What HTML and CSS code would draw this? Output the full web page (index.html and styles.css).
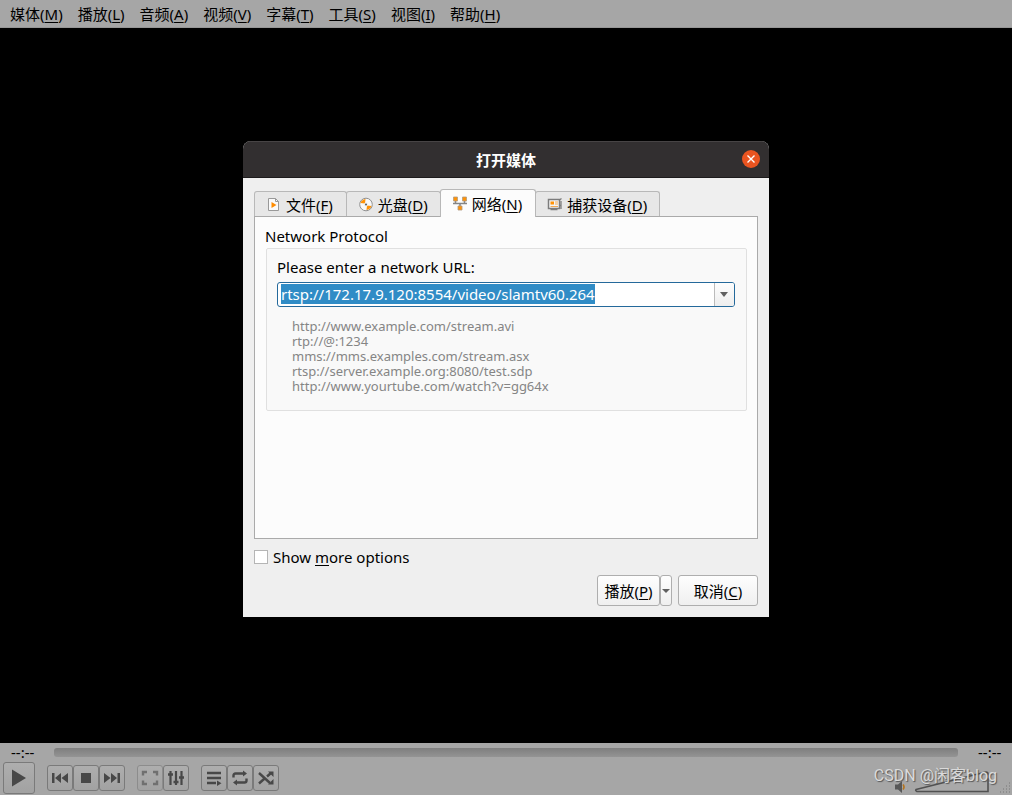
FILE: index.html
```html
<!DOCTYPE html>
<html lang="zh-CN">
<head>
<meta charset="utf-8">
<meta name="viewport" content="width=device-width, initial-scale=1">
<title>打开媒体</title>
<link rel="stylesheet" href="styles.css">
</head>
<body>
<div class="player">
  <nav class="menubar">
    <button class="menu">媒体(<u>M</u>)</button>
    <button class="menu">播放(<u>L</u>)</button>
    <button class="menu">音频(<u>A</u>)</button>
    <button class="menu">视频(<u>V</u>)</button>
    <button class="menu">字幕(<u>T</u>)</button>
    <button class="menu">工具(<u>S</u>)</button>
    <button class="menu">视图(<u>I</u>)</button>
    <button class="menu">帮助(<u>H</u>)</button>
  </nav>

  <main class="video">
    <section class="dialog" role="dialog" aria-labelledby="dialog-title">
      <header class="titlebar">
        <h1 class="title" id="dialog-title">打开媒体</h1>
        <button class="close" aria-label="Close">
          <svg width="18" height="18" viewBox="0 0 18 18"><path d="M5.500 5.500l7 7M12.500 5.500l-7 7" stroke="#fff" stroke-width="1.400" fill="none"/></svg>
        </button>
      </header>

      <div class="dialog-body">
        <div class="tabs" role="tablist">
          <button class="tab" role="tab" aria-selected="false">
            <svg class="tab-icon" width="16" height="16" viewBox="0 0 16 16"><path d="M2.500 1.500h7l3 3v9h-10z" fill="#fafafa" stroke="#999" stroke-linejoin="round"/><path d="M9.500 1.500v3h3" fill="none" stroke="#999"/><path d="M5.500 5v6l5-3z" fill="#ff8c00"/></svg>
            <span>文件(<u>F</u>)</span>
          </button>
          <button class="tab" role="tab" aria-selected="false">
            <svg class="tab-icon" width="16" height="16" viewBox="0 0 16 16"><circle cx="8" cy="7.500" r="6.300" fill="#f8f8f8" stroke="#909090"/><path d="M7 6.500L2.500 6q1-3.200 5-4zM9 8.500l4.500.5q-1 3.200-5 4z" fill="#ff9205"/><circle cx="8" cy="7.500" r="1.900" fill="#eee"/><circle cx="8" cy="7.500" r="1" fill="#555"/></svg>
            <span>光盘(<u>D</u>)</span>
          </button>
          <button class="tab tab-active" role="tab" aria-selected="true">
            <svg class="tab-icon" width="16" height="16" viewBox="0 0 16 16"><path d="M3.500 5v3M12.500 5v3M8 8v3M1 7.500h14" stroke="#858585" stroke-width="1.500" fill="none"/><path d="M1.500 1h4v4h-4zM10.500 1h4v4h-4zM6 10h4v4H6z" fill="#ff9205" stroke="#b09a80" stroke-width=".8"/></svg>
            <span>网络(<u>N</u>)</span>
          </button>
          <button class="tab" role="tab" aria-selected="false">
            <svg class="tab-icon" width="16" height="16" viewBox="0 0 16 16"><path d="M1.500 2.500h11v9h-11z" fill="#f5f5f5" stroke="#7c7c7c" stroke-width="1.500"/><path d="M12.500 3l2-1.500M14 4v8M3.500 12.500h7M12.500 8.500h2" stroke="#7c7c7c" stroke-width="1.300" fill="none"/><path d="M3.500 4.500H7v3H3.500z" fill="#ff9205"/><path d="M8 5h3M8 7h3M3.500 9.500H11" stroke="#f0ab58"/></svg>
            <span>捕获设备(<u>D</u>)</span>
          </button>
        </div>

        <div class="panel" role="tabpanel">
          <h2 class="group-title">Network Protocol</h2>
          <div class="group">
            <label class="url-label" for="url">Please enter a network URL:</label>
            <div class="combo">
              <input class="url" id="url" type="text" value="rtsp://172.17.9.120:8554/video/slamtv60.264" spellcheck="false" autofocus>
              <button class="combo-arrow" aria-label="Recent URLs"><svg width="8" height="5" viewBox="0 0 8 5"><path d="M0 0h8L4 5z" fill="#606060"/></svg></button>
            </div>
            <ul class="examples">
              <li>http://www.example.com/stream.avi</li>
              <li>rtp://@:1234</li>
              <li>mms://mms.examples.com/stream.asx</li>
              <li>rtsp://server.example.org:8080/test.sdp</li>
              <li>http://www.yourtube.com/watch?v=gg64x</li>
            </ul>
          </div>
        </div>

        <div class="more">
          <input class="check" id="more" type="checkbox">
          <label for="more">Show <u>m</u>ore options</label>
        </div>

        <div class="actions">
          <div class="split">
            <button class="btn btn-play">播放(<u>P</u>)</button>
            <button class="btn btn-arrow" aria-label="More play options"><svg width="8" height="4" viewBox="0 0 8 4"><path d="M0 0h8L4 4z" fill="#606060"/></svg></button>
          </div>
          <button class="btn btn-cancel">取消(<u>C</u>)</button>
        </div>
      </div>
    </section>
  </main>

  <footer class="controller">
    <div class="timeline">
      <span class="time">--:--</span>
      <input class="seek" type="range" value="0" aria-label="Position" disabled>
      <span class="time">--:--</span>
    </div>
    <div class="controls">
      <button class="tool tool-play" aria-label="Play"><svg width="20" height="20" viewBox="0 0 20 20"><path d="M3 1.500v17L17 10z" fill="currentColor"/></svg></button>
      <div class="tool-group">
        <button class="tool" aria-label="Previous"><svg width="18" height="18" viewBox="0 0 18 18"><path d="M1 4h2.500v10H1zM10 4v10L4 9zM17 4v10l-6.500-5z" fill="currentColor"/></svg></button>
        <button class="tool" aria-label="Stop"><svg width="18" height="18" viewBox="0 0 18 18"><path d="M4 4h10v10H4z" fill="currentColor"/></svg></button>
        <button class="tool" aria-label="Next"><svg width="18" height="18" viewBox="0 0 18 18"><path d="M17 4h-2.500v10H17zM8 4v10l6-5zM1 4v10l6.500-5z" fill="currentColor"/></svg></button>
      </div>
      <div class="tool-group">
        <button class="tool tool-off" aria-label="Fullscreen"><svg width="18" height="18" viewBox="0 0 18 18"><path d="M2 6.500v-3.500h4M12 3h4v3.500M16 11.500v3.500h-4M6 15h-4v-3.500" fill="none" stroke="currentColor" stroke-width="2.400"/></svg></button>
        <button class="tool" aria-label="Extended settings"><svg width="18" height="18" viewBox="0 0 18 18"><path d="M3.500 2v14M9 2v14M14.500 2v14" stroke="currentColor" stroke-width="2.200" fill="none"/><path d="M1 5.500h5M6.500 13h5M12 8.500h5" stroke="currentColor" stroke-width="2.600" fill="none"/></svg></button>
      </div>
      <div class="tool-group">
        <button class="tool" aria-label="Playlist"><svg width="18" height="18" viewBox="0 0 18 18"><path d="M2 4h14M2 9h14M2 14h9" stroke="currentColor" stroke-width="2.400" fill="none"/><path d="M12 11.500v5.500l4.500-2.700z" fill="currentColor"/></svg></button>
        <button class="tool" aria-label="Loop"><svg width="18" height="18" viewBox="0 0 18 18"><path d="M2.500 8.500V6.500q0-2 2-2H13M15.500 9.500v2q0 2-2 2H5" stroke="currentColor" stroke-width="2.400" fill="none"/><path d="M12 1.500v6l4-3zM6 10.500v6l-4-3z" fill="currentColor"/></svg></button>
        <button class="tool" aria-label="Random"><svg width="18" height="18" viewBox="0 0 18 18"><path d="M2 4l11 10M2 14.500L7 10M10 7.500L14 4" stroke="currentColor" stroke-width="2.400" fill="none"/><path d="M11 2.500h5.500V8zM11 15.500h5.500V10z" fill="currentColor"/></svg></button>
      </div>
      <div class="volume">
        <svg class="speaker" width="12" height="14" viewBox="0 0 12 14"><path d="M1 4.500h3L8 1v12L4 9.500H1z" fill="#585858"/><path d="M9 4.500q2 2.500 0 5" stroke="#b5731c" stroke-width="1.600" fill="none"/></svg>
        <div class="ramp">
          <svg width="76" height="24" viewBox="0 0 76 24"><path d="M2 19.500L72 2q2 0 2 2v17.500H3q-2-1-1-2z" fill="#a9a9a9" stroke="#515151" stroke-width="1.600"/></svg>
          <input class="ramp-input" type="range" aria-label="Volume" value="0">
        </div>
        <svg class="grip" width="12" height="12" viewBox="0 0 12 12"><path d="M9 1h1M6 4h1M9 4h1M3 7h1M6 7h1M9 7h1M0 10h1M3 10h1M6 10h1M9 10h1" stroke="#777" stroke-width="1"/></svg>
      </div>
    </div>
    <span class="watermark">CSDN @闲客blog</span>
  </footer>
</div>
<script src="app.js"></script>
</body>
</html>
```
FILE: app.js
```js
const url = document.getElementById("url");
url.focus();
url.select();
```
FILE: styles.css
```css
* { box-sizing: border-box; }

body {
  margin: 0;
  background: #000;
  color: #000;
  font: 15px/20px "Noto Sans", "Noto Sans CJK SC", sans-serif;
}

button, input { font: inherit; color: inherit; margin: 0; }
button { padding: 0; border: 0; background: none; white-space: nowrap; }
svg { display: block; flex: none; }
u { text-decoration-thickness: 1px; text-underline-offset: 2px; text-decoration-skip-ink: none; }

.player { display: flex; flex-direction: column; min-height: 100vh; }

.menubar {
  display: flex;
  gap: 15px;
  padding: 4px 10px 3px;
  background: #a6a6a6;
  border-bottom: 1px solid #969696;
}

.video {
  flex: 1;
  display: flex;
  align-items: center;
  justify-content: center;
  padding: 0 16px 13px;
}

.dialog {
  width: 526px;
  max-width: 100%;
  background: #efefef;
  border-radius: 8px 8px 0 0;
  overflow: hidden;
}

.titlebar {
  display: grid;
  grid-template-columns: 18px 1fr 18px;
  align-items: start;
  padding: 8px 9px 7px;
  background: #322f30;
  border-top: 1px solid #474445;
  border-bottom: 1px solid #1d1b1c;
  color: #fff;
}
.title { grid-column: 2; margin: 0; font-size: 15px; line-height: 20px; font-weight: 700; text-align: center; }
.close { width: 18px; height: 18px; border-radius: 50%; background: #e95420; }

.dialog-body { display: flex; flex-direction: column; padding: 11px; }

.tabs { display: flex; align-items: flex-end; }
.tab {
  display: flex;
  align-items: center;
  gap: 4px;
  height: 25px;
  margin-right: -1px;
  padding: 2px 12px 0 11px;
  background: #e7e7e7;
  border: 1px solid #b8b8b8;
  border-bottom: 0;
  border-radius: 3px 3px 0 0;
}
.tab:first-child { padding-right: 13px; }
.tab-active {
  position: relative;
  height: 28px;
  margin-bottom: -1px;
  padding-right: 13px;
  padding-bottom: 1px;
  background: #fcfcfc;
}

.panel {
  min-height: 323px;
  padding: 9px 10px 16px 11px;
  background: #fcfcfc;
  border: 1px solid #aaa;
}
.group-title { margin: 0 0 2px -1px; font-size: 15px; line-height: 20px; font-weight: 400; }
.group {
  padding: 8px 11px 16px 10px;
  background: #f9f9f9;
  border: 1px solid #e0e0e0;
  border-radius: 2px;
}
.url-label { display: block; }
.combo {
  display: flex;
  height: 25px;
  margin-top: 5px;
  background: #fff;
  border: 1px solid #24699b;
  border-radius: 3px;
  overflow: hidden;
}
.url {
  flex: 1;
  min-width: 0;
  padding: 0 3px 1px;
  border: 0;
  outline: 0;
  background: transparent;
}
.url::selection { background: #308cc6; color: #fff; }
.combo-arrow {
  display: flex;
  align-items: center;
  justify-content: center;
  width: 20px;
  padding-right: 2px;
  background: linear-gradient(#fdfdfd, #eee);
  border-left: 1px solid #bbb;
}
.examples {
  margin: 12px 0 0;
  padding: 0 0 0 15px;
  list-style: none;
  color: #858585;
  font-size: 13px;
  line-height: 15px;
}

.more { display: flex; align-items: center; gap: 5px; margin-top: 8px; }
.check { appearance: none; width: 14px; height: 14px; background: #fff; border: 1px solid #b5b5b5; }

.actions { display: flex; justify-content: flex-end; gap: 6px; margin-top: 8px; }
.split { display: flex; }
.btn {
  height: 31px;
  background: linear-gradient(#fefefe, #efefef);
  border: 1px solid #aeaeae;
  border-radius: 3px;
}
.btn-play { width: 63px; }
.btn-arrow { display: flex; align-items: center; justify-content: center; width: 12px; }
.btn-cancel { width: 80px; }

.controller { position: relative; background: #a6a6a6; color: #000; }
.timeline { display: flex; align-items: center; gap: 20px; height: 18px; padding: 0 11px; }
.time { width: 23px; line-height: 18px; font-size: 15px; white-space: nowrap; }
.seek {
  appearance: none;
  flex: 1;
  min-width: 0;
  height: 9px;
  border-radius: 3px;
  background: linear-gradient(#7e7e7e, #949494);
}
.seek::-webkit-slider-thumb { appearance: none; width: 0; height: 0; }

.controls { display: flex; align-items: center; gap: 12px; padding: 1px 0 1px 3px; }
.tool-group { display: flex; }
.tool {
  display: flex;
  align-items: center;
  justify-content: center;
  width: 26px;
  height: 26px;
  border: 1px solid #7a7a7a;
  border-radius: 3px;
  background: linear-gradient(#aeaeae, #a2a2a2);
  color: #484848;
}
.tool-play { width: 32px; height: 32px; }
.tool-off { color: #707070; border-color: #8c8c8c; }

.volume { display: flex; align-items: flex-end; align-self: flex-end; margin-left: auto; }
.speaker { margin-right: 8px; }
.ramp { display: grid; margin-right: 10px; }
.ramp > * { grid-area: 1 / 1; }
.ramp-input { width: 76px; height: 24px; opacity: 0; }

.watermark {
  position: absolute;
  right: 15px;
  bottom: 8px;
  color: #dadada;
  font: 16px/22px Roboto, "Noto Sans CJK SC", sans-serif;
  text-shadow: 1px 1px 1px #555;
}
```
